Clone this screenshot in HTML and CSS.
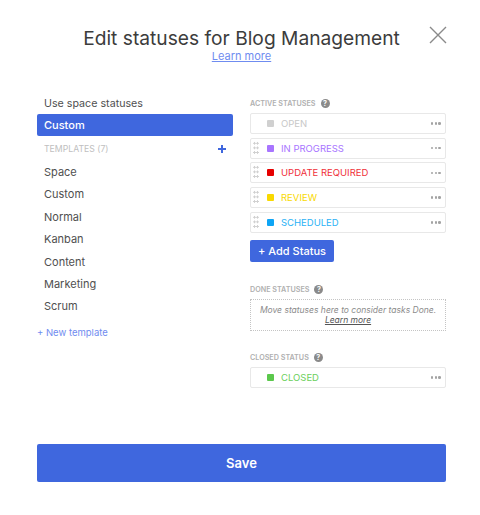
FILE: index.html
```html
<!DOCTYPE html>
<html lang="en">
  <head>
    <meta charset="UTF-8" />
    <title>Edit statuses</title>
    <link rel="stylesheet" href="styles.css">
  </head>
  <body>
    <div class="modal">
      <div class="header">
        <h1>Edit statuses for Blog Management</h1>
        <a class="learn">Learn more</a>
        <svg class="close" width="18" height="18" viewBox="0 0 18 18"><path d="M1 1L17 17M17 1L1 17" stroke="#8a8a8a" stroke-width="1.4" fill="none"/></svg>
      </div>
      <div class="columns">
        <div class="left">
          <div class="item first">Use space statuses</div>
          <div class="selected">Custom</div>
          <div class="templates"><span>TEMPLATES (7)</span><b class="plus"></b></div>
          <div class="item">Space</div>
          <div class="item">Custom</div>
          <div class="item">Normal</div>
          <div class="item">Kanban</div>
          <div class="item">Content</div>
          <div class="item">Marketing</div>
          <div class="item">Scrum</div>
          <a class="new-template">+ New template</a>
        </div>
        <div class="right">
          <div class="label">ACTIVE STATUSES <i class="help">?</i></div>
          <div class="status"><span class="dot open"></span><span class="name c-open">OPEN</span><span class="more"><i></i><i></i><i></i></span></div>
          <div class="status"><span class="grip"></span><span class="dot progress"></span><span class="name c-progress">IN PROGRESS</span><span class="more"><i></i><i></i><i></i></span></div>
          <div class="status"><span class="grip"></span><span class="dot update"></span><span class="name c-update">UPDATE REQUIRED</span><span class="more"><i></i><i></i><i></i></span></div>
          <div class="status"><span class="grip"></span><span class="dot review"></span><span class="name c-review">REVIEW</span><span class="more"><i></i><i></i><i></i></span></div>
          <div class="status"><span class="grip"></span><span class="dot scheduled"></span><span class="name c-scheduled">SCHEDULED</span><span class="more"><i></i><i></i><i></i></span></div>
          <button class="add">+ Add Status</button>
          <div class="label done-label">DONE STATUSES <i class="help">?</i></div>
          <div class="dropzone">Move statuses here to consider tasks Done.<br /><u>Learn more</u></div>
          <div class="label closed-label">CLOSED STATUS <i class="help">?</i></div>
          <div class="status"><span class="dot closed"></span><span class="name c-closed">CLOSED</span><span class="more"><i></i><i></i><i></i></span></div>
        </div>
      </div>
      <button class="save">Save</button>
    </div>
  </body>
</html>
```

FILE: styles.css
```css
body {
  margin: 0;
  background: #fff;
  font-family: "Inter", "Liberation Sans", sans-serif;
  color: #4a4a4a;
}
.modal {
  width: 480px;
  height: 515px;
  padding: 0 34px 0 37px;
  box-sizing: border-box;
}
.header {
  position: relative;
  height: 96px;
  padding-top: 27px;
  box-sizing: border-box;
  text-align: center;
}
h1 {
  margin: 0;
  font-size: 19.2px;
  line-height: 22px;
  font-weight: 400;
  color: #3c3c3c;
}
.learn {
  display: block;
  margin-top: 1px;
  font-size: 11px;
  line-height: 13px;
  color: #6f8cf0;
  text-decoration: underline;
}
.close {
  position: absolute;
  top: 26px;
  right: -1px;
}
.columns {
  display: flex;
  gap: 17px;
  height: 348px;
}
.left {
  width: 196px;
}
.right {
  width: 196px;
  margin-top: -1px;
}
.item {
  height: 22.4px;
  line-height: 22.4px;
  padding-left: 7px;
  font-size: 11px;
  color: #4f4f4f;
}
.item.first {
  height: 18px;
  line-height: 15px;
  font-size: 10.7px;
}
.selected {
  height: 22px;
  line-height: 22px;
  padding-left: 7px;
  border-radius: 2px;
  background: #3f67de;
  color: #fff;
  font-size: 11px;
  font-weight: 500;
}
.templates {
  display: flex;
  justify-content: space-between;
  align-items: center;
  height: 25px;
  padding: 0 7px;
  font-size: 8.7px;
  color: #c0c0c0;
}
.plus {
  width: 8px;
  height: 8px;
  background:
    linear-gradient(#3f67de, #3f67de) center / 8px 2px no-repeat,
    linear-gradient(#3f67de, #3f67de) center / 2px 8px no-repeat;
}
.new-template {
  display: block;
  margin-top: 9px;
  font-size: 9.5px;
  color: #6f8cf0;
}
.label {
  display: flex;
  align-items: center;
  gap: 5px;
  height: 16px;
  font-size: 7.2px;
  font-weight: 600;
  color: #b0b0b0;
}
.help {
  width: 9px;
  height: 9px;
  border-radius: 50%;
  background: #8a8a8a;
  color: #fff;
  font-size: 7px;
  font-style: normal;
  font-weight: 700;
  line-height: 9px;
  text-align: center;
}
.status {
  position: relative;
  display: flex;
  align-items: center;
  height: 21px;
  margin-top: 3.7px;
  padding-left: 16px;
  border: 1px solid #e8e8e8;
  border-radius: 2px;
  box-sizing: border-box;
  font-size: 9.5px;
}
.label + .status {
  margin-top: 2px;
}
.closed-label + .status {
  margin-top: 1px;
}
.grip {
  position: absolute;
  left: 2px;
  top: 2px;
  width: 6px;
  height: 14px;
  background: radial-gradient(circle, #d0d0d0 1px, transparent 1.2px) 0 0 / 3px 4.6px;
}
.dot {
  width: 7px;
  height: 7px;
  margin-right: 7px;
  border-radius: 1px;
}
.more {
  display: flex;
  gap: 1.2px;
  margin-left: auto;
  margin-right: 4px;
}
.more i {
  width: 2.6px;
  height: 2.6px;
  border-radius: 50%;
  background: #a3a3a3;
}
.open { background: #d0d0d0; }
.progress { background: #a875ff; }
.update { background: #e60000; }
.review { background: #f9d900; }
.scheduled { background: #0ea5f5; }
.closed { background: #5bc84c; }
.c-open { color: #c8c8c8; }
.c-progress { color: #a875ff; }
.c-update { color: #f0303a; }
.c-review { color: #f9d900; }
.c-scheduled { color: #2ab1f5; }
.c-closed { color: #6bcf5c; }
.add {
  display: block;
  width: 84px;
  height: 22px;
  margin-top: 7px;
  padding: 0;
  border: none;
  border-radius: 2px;
  background: #3f67de;
  color: #fff;
  font-family: inherit;
  font-size: 11px;
  font-weight: 500;
}
.done-label {
  margin-top: 20px;
}
.dropzone {
  height: 32px;
  margin-top: 1px;
  padding-top: 5px;
  box-sizing: border-box;
  border: 1px dotted #c4c4c4;
  text-align: center;
  font-size: 8.5px;
  line-height: 10.5px;
  font-style: italic;
  color: #8c8c8c;
}
.dropzone u {
  color: #555;
}
.closed-label {
  margin-top: 19px;
}
.save {
  display: block;
  width: 409px;
  height: 38px;
  padding: 0;
  border: none;
  border-radius: 2px;
  background: #3f67de;
  color: #fff;
  font-family: inherit;
  font-size: 13px;
  font-weight: 600;
}
```
